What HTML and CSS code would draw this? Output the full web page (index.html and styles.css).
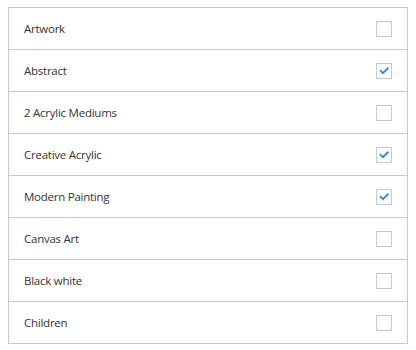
FILE: index.html
```html
<!DOCTYPE html>
<html>
<head>
<meta charset="utf-8">
<link rel="stylesheet" href="styles.css">
</head>
<body>
<ul class="list">
  <li class="item"><span class="label">Artwork</span><span class="box"></span></li>
  <li class="item"><span class="label">Abstract</span><span class="box checked"><svg viewBox="0 0 14 14" width="14" height="14"><path d="M3 6.2 L5.9 9.2 L11.4 3.8" fill="none" stroke="#3189e3" stroke-width="1.9"/></svg></span></li>
  <li class="item"><span class="label">2 Acrylic Mediums</span><span class="box"></span></li>
  <li class="item"><span class="label">Creative Acrylic</span><span class="box checked"><svg viewBox="0 0 14 14" width="14" height="14"><path d="M3 6.2 L5.9 9.2 L11.4 3.8" fill="none" stroke="#3189e3" stroke-width="1.9"/></svg></span></li>
  <li class="item"><span class="label">Modern Painting</span><span class="box checked"><svg viewBox="0 0 14 14" width="14" height="14"><path d="M3 6.2 L5.9 9.2 L11.4 3.8" fill="none" stroke="#3189e3" stroke-width="1.9"/></svg></span></li>
  <li class="item"><span class="label">Canvas Art</span><span class="box"></span></li>
  <li class="item"><span class="label">Black white</span><span class="box"></span></li>
  <li class="item"><span class="label">Children</span><span class="box"></span></li>
</ul>
</body>
</html>
```
FILE: styles.css
```css
html, body { margin: 0; padding: 0; background: #fff; }
body { padding: 7px 8px; }
.list {
  list-style: none;
  margin: 0;
  padding: 0;
  width: 400px;
  box-sizing: border-box;
  border: 1px solid #c8c8c8;
  font-family: "Open Sans", "Noto Sans", sans-serif;
  font-size: 11.5px;
  letter-spacing: -0.25px;
  color: #333;
}
.item {
  display: flex;
  align-items: center;
  justify-content: space-between;
  height: 41px;
  padding: 0 15px 0 15px;
  border-bottom: 1px solid #c8c8c8;
}
.item:last-child { border-bottom: none; }
.box {
  width: 16px;
  height: 16px;
  box-sizing: border-box;
  border: 1px solid #c8c8c8;
  display: flex;
  align-items: center;
  justify-content: center;
  margin-top: 1px;
}
.box svg { display: block; }
```
